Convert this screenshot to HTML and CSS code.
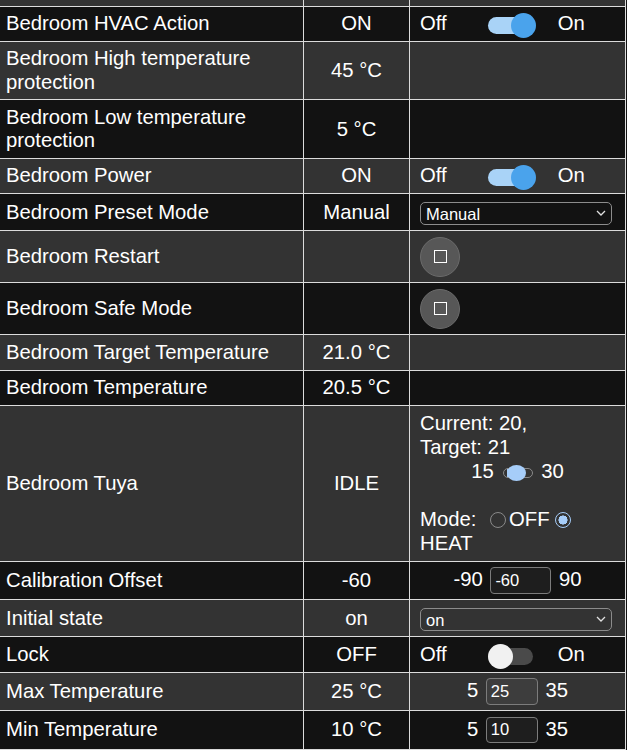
FILE: index.html
```html
<!DOCTYPE html>
<html lang="en">
<head>
<meta charset="utf-8">
<title>Entities</title>
<link rel="stylesheet" href="styles.css">
</head>
<body>
<table class="entities">
  <colgroup>
    <col class="c-name">
    <col class="c-state">
    <col class="c-act">
  </colgroup>
  <thead>
    <tr class="cut"><th></th><th></th><th></th></tr>
  </thead>
  <tbody>
    <tr>
      <td>Bedroom HVAC Action</td><td>ON</td>
      <td><label class="switch"><span>Off</span><span class="lever on"></span><span>On</span></label></td>
    </tr>
    <tr>
      <td>Bedroom High temperature protection</td><td>45 °C</td><td></td>
    </tr>
    <tr>
      <td>Bedroom Low temperature protection</td><td>5 °C</td><td></td>
    </tr>
    <tr>
      <td>Bedroom Power</td><td>ON</td>
      <td><label class="switch"><span>Off</span><span class="lever on"></span><span>On</span></label></td>
    </tr>
    <tr>
      <td>Bedroom Preset Mode</td><td>Manual</td>
      <td><span class="sel"><select><option>Manual</option></select><svg class="chev" viewBox="0 0 10 6"><polyline points="1,1 5,5 9,1"/></svg></span></td>
    </tr>
    <tr>
      <td>Bedroom Restart</td><td></td>
      <td><button class="rnd" type="button"><span class="sq"></span></button></td>
    </tr>
    <tr>
      <td>Bedroom Safe Mode</td><td></td>
      <td><button class="rnd" type="button"><span class="sq"></span></button></td>
    </tr>
    <tr>
      <td>Bedroom Target Temperature</td><td>21.0 °C</td><td></td>
    </tr>
    <tr>
      <td>Bedroom Temperature</td><td>20.5 °C</td><td></td>
    </tr>
    <tr>
      <td>Bedroom Tuya</td><td>IDLE</td>
      <td>
        <div class="climate">
          <div>Current: 20,<br>Target: 21</div>
          <div class="range-line">15 <input class="range" type="range" min="15" max="30" value="21"> 30</div>
          <div class="blank"></div>
          <div>Mode: <input class="radio first" type="radio" name="mode">OFF <input class="radio checked" type="radio" name="mode" checked> HEAT</div>
        </div>
      </td>
    </tr>
    <tr>
      <td>Calibration Offset</td><td>-60</td>
      <td class="num">-90 <input class="numin wide" type="number" value="-60"> 90</td>
    </tr>
    <tr>
      <td>Initial state</td><td>on</td>
      <td><span class="sel"><select><option>on</option></select><svg class="chev" viewBox="0 0 10 6"><polyline points="1,1 5,5 9,1"/></svg></span></td>
    </tr>
    <tr>
      <td>Lock</td><td>OFF</td>
      <td><label class="switch"><span>Off</span><span class="lever"></span><span>On</span></label></td>
    </tr>
    <tr>
      <td>Max Temperature</td><td>25 °C</td>
      <td class="num">5 <input class="numin" type="number" value="25"> 35</td>
    </tr>
    <tr>
      <td>Min Temperature</td><td>10 °C</td>
      <td class="num">5 <input class="numin" type="number" value="10"> 35</td>
    </tr>
  </tbody>
</table>
</body>
</html>
```

FILE: styles.css
```css
* { box-sizing: border-box; }

html, body {
  margin: 0;
  padding: 0;
  background: #121212;
}

body {
  font-family: "Liberation Sans", Arial, sans-serif;
  font-size: 20.3px;
  line-height: 23.3px;
  color: #ffffff;
}

.entities {
  border-collapse: collapse;
  table-layout: fixed;
  width: 626px;
  margin: -1px 0 0 -1px;
  border: 1px solid #dcdcdc;
}

.c-name { width: 304px; }
.c-state { width: 106px; }
.c-act { width: 216px; }

.entities th,
.entities td {
  border: 1px solid #dcdcdc;
  padding: 5.5px 6px;
  vertical-align: middle;
  text-align: left;
}

.entities .cut th {
  height: 6.5px;
  padding: 0;
}

.entities thead tr,
.entities tbody tr:nth-child(2n) {
  background: #333333;
}

.entities td:nth-child(2) {
  text-align: center;
}

.entities td:nth-child(3) {
  padding-left: 10px;
  padding-right: 10px;
}

.entities td.num { text-align: center; }

/* switch */
.switch {
  display: flex;
  align-items: center;
}

.lever {
  position: relative;
  width: 45px;
  height: 17px;
  border-radius: 9px;
  margin: 3px 25px 0 41px;
  background: #4a4a4a;
}

.lever::after {
  content: "";
  position: absolute;
  top: -4px;
  left: 0;
  width: 25px;
  height: 25px;
  border-radius: 50%;
  background: #f1f1f1;
}

.lever.on { background: #a9d3f7; }
.lever.on::after { left: 23px; background: #4aa3ec; }

/* select */
.sel {
  display: block;
  position: relative;
  width: 192px;
  margin-top: 2.5px;
}

.sel select {
  display: block;
  -webkit-appearance: none;
  appearance: none;
  width: 192px;
  height: 22.5px;
  margin: 0;
  padding: 0 20px 0 5px;
  font: 16.5px "Liberation Sans", Arial, sans-serif;
  color: #ffffff;
  background: transparent;
  border: 1px solid #8c8c8c;
  border-radius: 5px;
}

.sel .chev {
  position: absolute;
  right: 6px;
  top: 8px;
  width: 10px;
  height: 6px;
  fill: none;
  stroke: #e0e0e0;
  stroke-width: 1.3;
  pointer-events: none;
}

/* round button */
.rnd {
  display: flex;
  align-items: center;
  justify-content: center;
  width: 40px;
  height: 40px;
  padding: 0;
  margin: 0;
  border-radius: 50%;
  background: #575757;
  border: 1px solid #6b6b6b;
}

.sq {
  display: block;
  width: 13px;
  height: 13px;
  border: 1.5px solid #ffffff;
}

/* climate */
.climate { line-height: 24px; }

.range-line { text-align: center; }

.range {
  -webkit-appearance: none;
  appearance: none;
  width: 30px;
  height: 16px;
  margin: 0 3px;
  padding: 0;
  background: transparent;
  vertical-align: middle;
}

.range::-webkit-slider-runnable-track {
  height: 10px;
  border-radius: 5px;
  border: 1px solid #8a8a8a;
  background: linear-gradient(90deg, transparent 0 12%, #a6cdf9 12% 50%, transparent 50%);
}

.range::-webkit-slider-thumb {
  -webkit-appearance: none;
  appearance: none;
  width: 19px;
  height: 16px;
  border-radius: 50%;
  background: #a6cdf9;
  margin-top: -4px;
}

.blank { height: 24px; }

.radio {
  -webkit-appearance: none;
  appearance: none;
  width: 16px;
  height: 16px;
  margin: 0 3px 0 0;
  border-radius: 50%;
  border: 1px solid #8a8a8a;
  background: transparent;
  vertical-align: -2px;
}

.radio.first { margin-left: 8px; }

.radio.checked {
  border: 1.5px solid #a6cdf9;
  background: radial-gradient(circle closest-side, #a6cdf9 0 62%, transparent 68%);
}

/* number inputs */
.numin {
  -webkit-appearance: none;
  appearance: textfield;
  width: 52px;
  height: 26.5px;
  margin: 0 2px;
  padding: 0 4px;
  font: 16.5px "Liberation Sans", Arial, sans-serif;
  color: #ffffff;
  background: rgba(255, 255, 255, 0.05);
  border: 1px solid #7c7c7c;
  border-radius: 4px;
  vertical-align: middle;
}

.numin.wide { width: 61px; }

.numin::-webkit-inner-spin-button,
.numin::-webkit-outer-spin-button {
  -webkit-appearance: none;
  margin: 0;
}
```
